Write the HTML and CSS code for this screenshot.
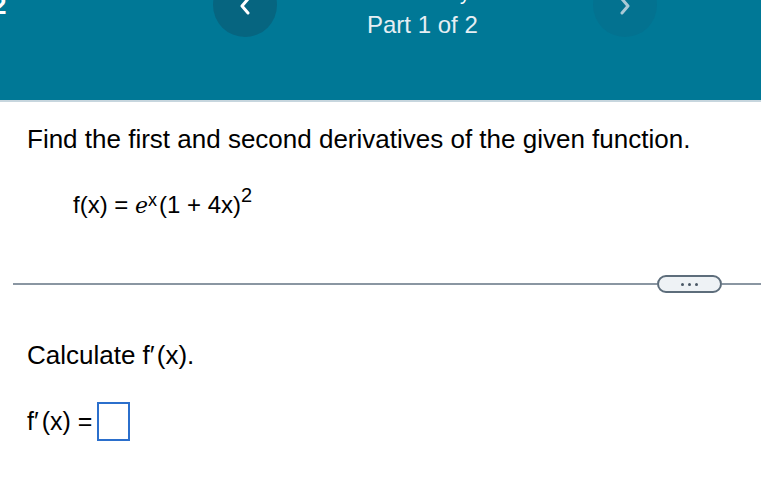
FILE: index.html
```html
<!DOCTYPE html>
<html>
<head>
<meta charset="utf-8">
<link rel="stylesheet" href="styles.css">
</head>
<body>
<header class="header">
  <span class="corner">2</span>
  <div class="nav">
    <button class="circle prev" aria-label="Previous">
      <svg width="14" height="18" viewBox="0 0 14 18"><path d="M10 2 L4 9 L10 16" fill="none" stroke="#ffffff" stroke-width="3" stroke-linecap="round" stroke-linejoin="round"/></svg>
    </button>
    <div class="part">
      <span class="tail">y</span>
      <span class="part-label">Part 1 of 2</span>
    </div>
    <button class="circle next" aria-label="Next">
      <svg width="14" height="18" viewBox="0 0 14 18"><path d="M4 2 L10 9 L4 16" fill="none" stroke="#a9c9d6" stroke-width="3" stroke-linecap="round" stroke-linejoin="round"/></svg>
    </button>
  </div>
</header>
<main class="content">
  <p class="prompt">Find the first and second derivatives of the given function.</p>
  <p class="formula">f(x) = <i class="e">e</i><sup class="supx">x</sup>(1 + 4x)<sup class="sup2">2</sup></p>
  <div class="divider">
    <span class="rule"></span>
    <button class="more"><span class="dot"></span><span class="dot"></span><span class="dot"></span></button>
    <span class="rule short"></span>
  </div>
  <p class="calc">Calculate f<span class="prime">′</span>(x).</p>
  <div class="answer">
    <span class="lhs">f<span class="prime">′</span>(x) =</span>
    <span class="box"></span>
  </div>
</main>
</body>
</html>
```
FILE: styles.css
```css
html, body {
  margin: 0;
  padding: 0;
  background: #ffffff;
  font-family: "Liberation Sans", Arial, sans-serif;
  color: #000;
  overflow: hidden;
}
.header {
  position: relative;
  height: 100px;
  background: #007896;
  border-bottom: 2px solid #c7d6de;
  overflow: hidden;
}
.corner {
  position: absolute;
  left: -8px;
  top: -10px;
  color: #fff;
  font-size: 26px;
  font-weight: bold;
}
.nav {
  display: flex;
  align-items: flex-start;
  margin-left: 213px;
  margin-top: -27px;
}
.circle {
  width: 64px;
  height: 64px;
  border-radius: 50%;
  border: none;
  padding: 2px 0 0 0;
  display: flex;
  align-items: center;
  justify-content: center;
}
.circle svg { display: block; }
.prev { background: #066580; }
.next { background: #037290; }
.part {
  width: 316px;
  position: relative;
  padding-top: 38px;
  padding-left: 90px;
  box-sizing: border-box;
  line-height: 28px;
}
.tail {
  position: absolute;
  left: 183px;
  top: 10px;
  color: #fff;
  font-size: 20px;
  line-height: 20px;
}
.part-label {
  color: #e6eef3;
  font-size: 24px;
}
.content {
  padding: 0 0 0 27px;
}
.prompt {
  margin: 22px 0 0 0;
  font-size: 26px;
  line-height: 30px;
}
.formula {
  margin: 37px 0 0 46px;
  font-size: 24px;
  line-height: 28px;
}
.e {
  font-family: "DejaVu Serif", "Liberation Serif", serif;
  font-size: 22px;
}
.supx {
  font-size: 18px;
  vertical-align: 7px;
  line-height: 0;
  margin-right: 2px;
}
.sup2 {
  font-size: 20px;
  vertical-align: 11px;
  line-height: 0;
}
.divider {
  display: flex;
  align-items: center;
  margin: 55px 0 0 -14px;
}
.rule {
  flex: 1;
  height: 2px;
  background: #8a96a2;
}
.rule.short { flex: 0 0 39px; }
.more {
  width: 65px;
  height: 18px;
  border: 2px solid #5d6d7b;
  border-radius: 9px;
  background: #eef2f5;
  display: flex;
  align-items: center;
  justify-content: center;
  gap: 4px;
  padding: 0;
}
.dot {
  width: 3px;
  height: 3px;
  border-radius: 50%;
  background: #4a5866;
}
.calc {
  margin: 47px 0 0 0;
  font-size: 26px;
  line-height: 30px;
}
.prime {
  margin-right: 2px;
}
.answer {
  display: flex;
  align-items: center;
  margin-top: 32px;
  gap: 5px;
}
.lhs {
  font-size: 25px;
}
.lhs .prime {
  margin-right: 3px;
}
.box {
  width: 29px;
  height: 35px;
  border: 2px solid #2b6fcc;
}
```
